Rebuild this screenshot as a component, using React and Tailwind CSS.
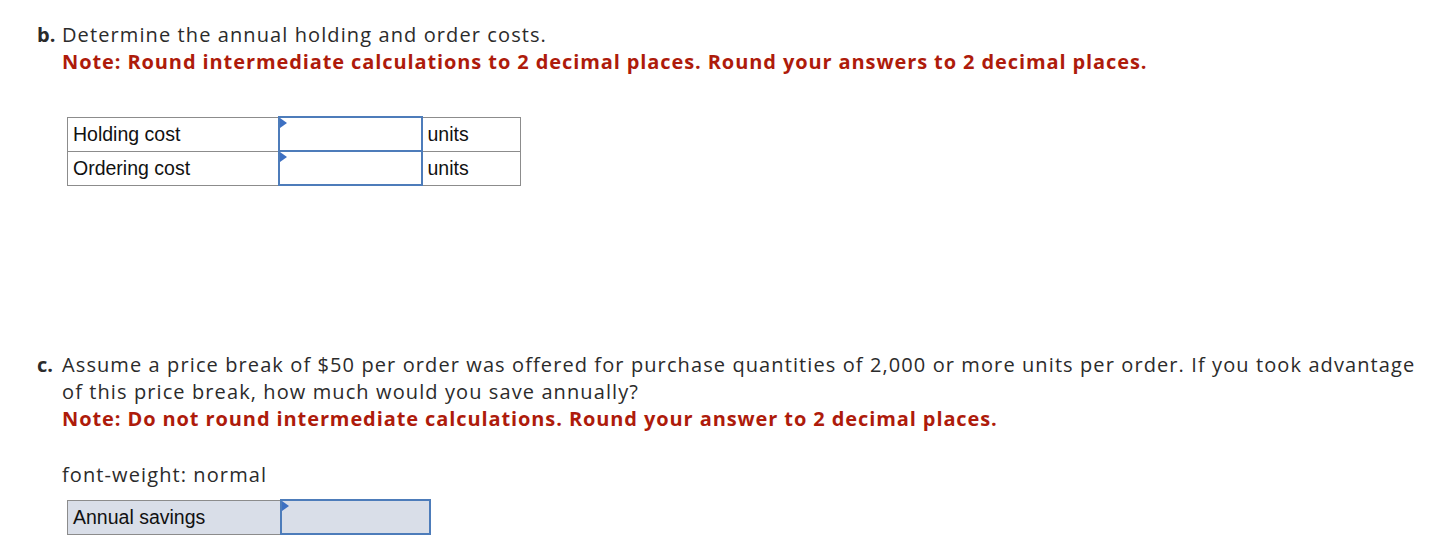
export default function App() {
  const rows = ["Holding cost", "Ordering cost"];

  return (
    <div
      className="min-h-[544px] w-[1432px] bg-white pl-[37px] pt-[21px] text-[20px] leading-[27px] tracking-[1.1px] text-[#2b2b2b]"
      style={{ fontFamily: "'Open Sans', 'Liberation Sans', sans-serif" }}
    >
      {/* PART B */}
      <div className="flex">
        <span className="w-[25px] shrink-0 font-bold tracking-normal">b.</span>
        <div>
          <div>Determine the annual holding and order costs.</div>
          <div className="font-bold tracking-[0.9px] text-[#ae1b0b]">
            Note: Round intermediate calculations to 2 decimal places. Round your answers to 2 decimal places.
          </div>
        </div>
      </div>

      <table
        className="ml-[30px] mt-[41px] border-collapse text-[19.5px] leading-[20px] tracking-normal text-[#111]"
        style={{ fontFamily: "'Liberation Sans', Arial, sans-serif" }}
      >
        <tbody>
          {rows.map((r) => (
            <tr key={r} className="h-[34px]">
              <td className="w-[211px] border border-[#8c8c8c] px-[5px]">{r}</td>
              <td className="relative w-[143px] border-2 border-[#4d7cba] p-0">
                <span className="absolute left-0 top-0 h-0 w-0 border-y-[5px] border-l-[7px] border-y-transparent border-l-[#3d70c2]" />
              </td>
              <td className="w-[99px] border border-[#8c8c8c] px-[5px]">units</td>
            </tr>
          ))}
        </tbody>
      </table>

      {/* PART C */}
      <div className="mt-[165px] flex">
        <span className="w-[25px] shrink-0 font-bold tracking-normal">c.</span>
        <div>
          <div>
            Assume a price break of $50 per order was offered for purchase quantities of 2,000 or more units per order. If you took advantage of this price break, how much would you save annually?
          </div>
          <div className="font-bold tracking-[0.9px] text-[#ae1b0b]">
            Note: Do not round intermediate calculations. Round your answer to 2 decimal places.
          </div>
          <div className="mt-[29px]">font-weight: normal</div>
          <table
            className="ml-[5px] mt-[11px] border-collapse text-[19.5px] leading-[20px] tracking-normal text-[#111]"
            style={{ fontFamily: "'Liberation Sans', Arial, sans-serif" }}
          >
            <tbody>
              <tr className="h-[34px] bg-[#d9dee8]">
                <td className="w-[213px] border border-[#8c8c8c] px-[5px]">Annual savings</td>
                <td className="relative w-[149px] border-2 border-[#4d7cba] p-0">
                  <span className="absolute left-0 top-0 h-0 w-0 border-y-[5px] border-l-[7px] border-y-transparent border-l-[#3d70c2]" />
                </td>
              </tr>
            </tbody>
          </table>
        </div>
      </div>
    </div>
  );
}
